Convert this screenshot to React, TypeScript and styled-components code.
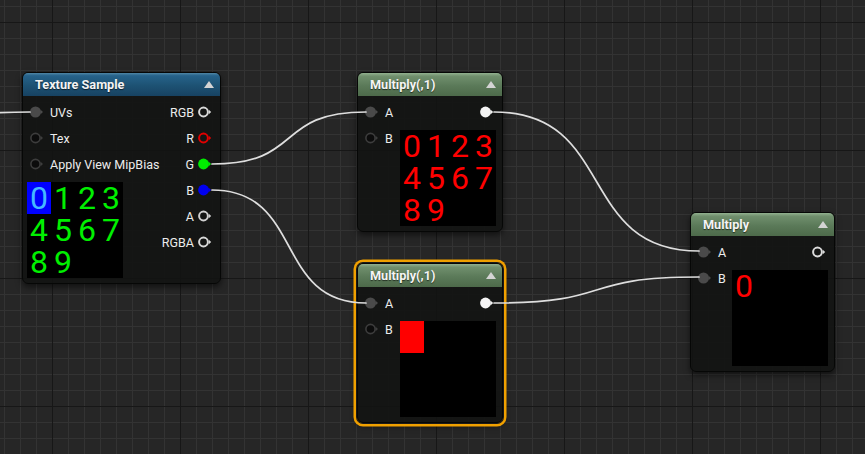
import React from "react";
import styled, { createGlobalStyle } from "styled-components";

const GlobalStyle = createGlobalStyle`
  html, body {
    margin: 0;
    padding: 0;
    background: #262626;
  }
  body {
    font-family: Roboto, "Liberation Sans", sans-serif;
  }
`;

const Canvas = styled.div`
  position: relative;
  width: 865px;
  height: 454px;
  overflow: hidden;
  background-color: #262626;
  background-image: linear-gradient(#171717 1px, transparent 1px),
    linear-gradient(90deg, #171717 1px, transparent 1px),
    linear-gradient(#333333 1px, transparent 1px),
    linear-gradient(90deg, #333333 1px, transparent 1px);
  background-size: 128px 128px, 128px 128px, 16px 16px, 16px 16px;
  background-position: 52px 22px, 52px 22px, 4px 6px, 4px 6px;
`;

const NodeFrame = styled.div<{ $x: number; $y: number; $w: number; $selected?: boolean }>`
  position: absolute;
  left: ${p => p.$x}px;
  top: ${p => p.$y}px;
  width: ${p => p.$w}px;
  box-sizing: border-box;
  border: 1px solid #060706;
  border-radius: 6px;
  background: rgba(18, 20, 18, 0.92);
  box-shadow: ${p =>
    p.$selected
      ? "0 0 0 1px #1a1a1a, 0 0 0 3.5px #f0a000, 0 3px 6px rgba(0,0,0,0.5)"
      : "0 3px 6px rgba(0, 0, 0, 0.55)"};
`;

const headerBg = {
  blue: "linear-gradient(180deg, #4f86a6 0%, #26628a 12%, #1d5273 55%, #174262 100%)",
  green: "linear-gradient(180deg, #92b18f 0%, #708f6d 14%, #5b7a59 55%, #4d6a4a 100%)"
};

const Header = styled.div<{ $tone: "blue" | "green" }>`
  height: 23px;
  display: flex;
  align-items: center;
  justify-content: space-between;
  padding: 0 6px 0 12px;
  border-radius: 5px 5px 0 0;
  background: ${p => headerBg[p.$tone]};
  color: #f4f4f4;
  font-weight: bold;
  font-size: 12.7px;
  text-shadow: 0 1px 1px rgba(0, 0, 0, 0.6);
`;

const Collapse = styled.span`
  width: 0;
  height: 0;
  border-left: 5.5px solid transparent;
  border-right: 5.5px solid transparent;
  border-bottom: 7px solid #d4d4d4;
  margin-bottom: 1px;
`;

const Body = styled.div`
  display: flex;
  justify-content: space-between;
  padding: 3px 0 5px;
`;

const Column = styled.div<{ $side: "in" | "out" }>`
  display: flex;
  flex-direction: column;
  align-items: ${p => (p.$side === "in" ? "flex-start" : "flex-end")};
`;

const PinRow = styled.div<{ $side: "in" | "out" }>`
  height: 26px;
  display: flex;
  align-items: center;
  flex-direction: ${p => (p.$side === "in" ? "row" : "row-reverse")};
  gap: ${p => (p.$side === "in" ? "6px" : "4px")};
  padding: ${p => (p.$side === "in" ? "0 0 0 7px" : "0 8px 0 0")};
  font-size: 12.5px;
  color: #ececec;
  white-space: nowrap;
`;

const Preview = styled.div<{ $place: "below" | "beside" }>`
  flex: none;
  width: 96px;
  height: 96px;
  margin: ${p => (p.$place === "below" ? "5px 0 0 4px" : "5px 6px 0 0")};
  background: #000;
  display: grid;
  grid-template-columns: repeat(4, 24px);
  grid-auto-rows: 32px;
  font-family: Roboto, "DejaVu Sans", sans-serif;
  font-size: 32px;
  line-height: 32px;
`;

const Digit = styled.span<{ $color: string; $bg?: string }>`
  text-align: center;
  color: ${p => p.$color};
  background: ${p => p.$bg || "transparent"};
`;

const Wires = styled.svg`
  position: absolute;
  left: 0;
  top: 0;
  pointer-events: none;
`;

type PinKind = "linked" | "open" | "hollow" | "filled";

const PinIcon = ({ kind, color = "#d8d8d8" }: { kind: PinKind; color?: string }) => {
  if (kind === "linked")
    return (
      <svg width="14" height="12" viewBox="0 0 14 12">
        <circle cx="5.5" cy="6" r="5.5" fill="#4a4a4a" />
        <path d="M10.6 3.8 L13 6 L10.6 8.2 Z" fill="#4a4a4a" />
      </svg>
    );
  if (kind === "open")
    return (
      <svg width="14" height="12" viewBox="0 0 14 12">
        <circle cx="5.5" cy="6" r="4.6" fill="#0c0c0c" stroke="#3d3d3d" strokeWidth="1.6" />
        <path d="M10.6 3.8 L13 6 L10.6 8.2 Z" fill="#3d3d3d" />
      </svg>
    );
  if (kind === "hollow")
    return (
      <svg width="14" height="12" viewBox="0 0 14 12">
        <circle cx="5.5" cy="6" r="4.4" fill="none" stroke={color} strokeWidth="2" />
        <path d="M10.8 3.8 L13.2 6 L10.8 8.2 Z" fill={color} />
      </svg>
    );
  return (
    <svg width="14" height="12" viewBox="0 0 14 12">
      <circle cx="5.5" cy="6" r="5.4" fill={color} />
      <path d="M10.4 3.6 L13.2 6 L10.4 8.4 Z" fill={color} />
    </svg>
  );
};

type Pin = { label: string; kind: PinKind; color?: string };

const PinLine = ({ pin, side }: { pin: Pin; side: "in" | "out" }) => (
  <PinRow $side={side}>
    <PinIcon kind={pin.kind} color={pin.color} />
    <span>{pin.label}</span>
  </PinRow>
);

const DigitGrid = ({ color, first }: { color: string; first?: string }) => (
  <>
    {"0123456789".split("").map((d, i) => (
      <Digit key={d} $color={i === 0 && first ? "#45b8ff" : color} $bg={i === 0 ? first : undefined}>
        {d}
      </Digit>
    ))}
  </>
);

type MultiplyProps = {
  x: number;
  y: number;
  w: number;
  title: string;
  a: PinKind;
  b: PinKind;
  out: PinKind;
  selected?: boolean;
  children: React.ReactNode;
};

const MultiplyNode = (props: MultiplyProps) => (
  <NodeFrame $x={props.x} $y={props.y} $w={props.w} $selected={props.selected}>
    <Header $tone="green">
      <span>{props.title}</span>
      <Collapse />
    </Header>
    <Body>
      <Column $side="in">
        <PinLine side="in" pin={{ label: "A", kind: props.a }} />
        <PinLine side="in" pin={{ label: "B", kind: props.b }} />
      </Column>
      <Column $side="out">
        <PinLine side="out" pin={{ label: "", kind: props.out, color: props.out === "filled" ? "#f4f4f4" : "#dcdcdc" }} />
        <Preview $place="beside">{props.children}</Preview>
      </Column>
    </Body>
  </NodeFrame>
);

const textureInputs: Pin[] = [
  { label: "UVs", kind: "linked" },
  { label: "Tex", kind: "open" },
  { label: "Apply View MipBias", kind: "open" }
];

const textureOutputs: Pin[] = [
  { label: "RGB", kind: "hollow", color: "#d8d8d8" },
  { label: "R", kind: "hollow", color: "#e00000" },
  { label: "G", kind: "filled", color: "#00ec00" },
  { label: "B", kind: "filled", color: "#0000f0" },
  { label: "A", kind: "hollow", color: "#d0d0d0" },
  { label: "RGBA", kind: "hollow", color: "#d8d8d8" }
];

const wire = (x1: number, y1: number, x2: number, y2: number) => {
  const d = Math.abs(x2 - x1) * 0.6;
  return `M${x1} ${y1} C${x1 + d} ${y1}, ${x2 - d} ${y2}, ${x2} ${y2}`;
};

const links = [
  "M-150 125 C-60 125, -60 112, 30 112",
  wire(212, 164, 366, 112),
  wire(212, 190, 366, 303),
  wire(494, 112, 699, 251),
  wire(494, 303, 699, 277)
];

const App = () => (
  <>
    <GlobalStyle />
    <Canvas>
      <NodeFrame $x={22} $y={72} $w={199}>
        <Header $tone="blue">
          <span>Texture Sample</span>
          <Collapse />
        </Header>
        <Body>
          <Column $side="in">
            {textureInputs.map(p => (
              <PinLine key={p.label} side="in" pin={p} />
            ))}
            <Preview $place="below">
              <DigitGrid color="#00f000" first="#0000ff" />
            </Preview>
          </Column>
          <Column $side="out">
            {textureOutputs.map(p => (
              <PinLine key={p.label} side="out" pin={p} />
            ))}
          </Column>
        </Body>
      </NodeFrame>

      <MultiplyNode x={357} y={72} w={146} title="Multiply(,1)" a="linked" b="open" out="filled">
        <DigitGrid color="#ff0000" />
      </MultiplyNode>

      <MultiplyNode x={357} y={263} w={146} title="Multiply(,1)" a="linked" b="open" out="filled" selected>
        <Digit $color="#ff0000" $bg="#ff0000" />
      </MultiplyNode>

      <MultiplyNode x={690} y={212} w={145} title="Multiply" a="linked" b="linked" out="hollow">
        <Digit $color="#ff0000">0</Digit>
      </MultiplyNode>

      <Wires width={865} height={454} viewBox="0 0 865 454">
        {links.map((d, i) => (
          <path key={i} d={d} fill="none" stroke="#dedede" strokeWidth={1.7} strokeLinecap="round" />
        ))}
      </Wires>
    </Canvas>
  </>
);

export default App;
